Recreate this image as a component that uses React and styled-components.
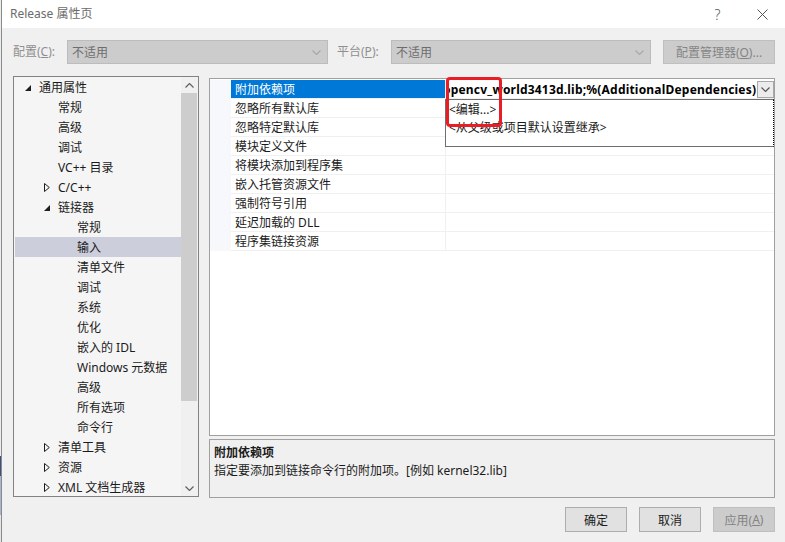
import React from "react";
import styled, { createGlobalStyle } from "styled-components";

const GlobalStyle = createGlobalStyle`
  html, body { margin: 0; padding: 0; background: #f0f0f0; }
  body {
    font-family: "Noto Sans", "Noto Sans CJK SC", sans-serif;
    font-size: 12px;
    color: #1b1b1b;
  }
  * { box-sizing: border-box; }
`;

const Screen = styled.div`
  width: 785px;
  height: 542px;
  display: flex;
  overflow: hidden;
`;

const Backdrop = styled.div`
  width: 1px;
  flex: none;
  background: linear-gradient(
    to bottom,
    #ececec 0 456px,
    #3e5183 456px 476px,
    #a9b6d2 476px 515px,
    #e6e6e6 515px
  );
`;

const Dialog = styled.div`
  flex: 1;
  display: flex;
  flex-direction: column;
  border-left: 1px solid #8a8a8a;
  background: #f0f0f0;
`;

const TitleBar = styled.div`
  height: 28px;
  flex: none;
  background: #fff;
  display: flex;
  align-items: center;
  padding-left: 8px;
  color: #6b6b6b;
`;

const TitleText = styled.span`
  flex: 1;
  line-height: 16px;
`;

const TitleButton = styled.span`
  width: 45px;
  height: 28px;
  display: flex;
  align-items: center;
  justify-content: center;
  color: #555;
  font-size: 14px;
  font-weight: 300;
`;

const Body = styled.div`
  flex: 1;
  display: flex;
  flex-direction: column;
  padding: 12px 10px 0 11px;
`;

const Toolbar = styled.div`
  height: 24px;
  display: flex;
  align-items: center;
`;

const FieldLabel = styled.span`
  width: 54px;
  flex: none;
  margin-left: ${(p) => p.$offset || 0}px;
  color: #8f8f8f;
  line-height: 16px;
`;

const Select = styled.div`
  width: ${(p) => p.$w}px;
  height: 24px;
  flex: none;
  background: #cccccc;
  border: 1px solid #bcbcbc;
  display: flex;
  align-items: center;
  justify-content: space-between;
  padding: 0 6px 0 4px;
  color: #6d6d6d;
`;

const ToolButton = styled.div`
  margin-left: auto;
  width: 112px;
  height: 24px;
  background: #cccccc;
  border: 1px solid #bfbfbf;
  display: flex;
  align-items: center;
  justify-content: center;
  color: #858585;
`;

const Main = styled.div`
  margin-top: 12px;
  height: 422px;
  display: flex;
  gap: 10px;
`;

const TreePanel = styled.div`
  width: 186px;
  height: 421px;
  flex: none;
  border: 1px solid #828282;
  background: #f5f5f5;
  display: flex;
  overflow: hidden;
`;

const TreeList = styled.div`
  flex: 1;
  padding-left: 1px;
  overflow: hidden;
`;

const TreeRow = styled.div`
  height: 20px;
  display: flex;
  align-items: center;
  padding-left: ${(p) => 10 + p.$level * 19}px;
  background: ${(p) => (p.$selected ? "#cccedb" : "transparent")};
  white-space: nowrap;
`;

const ArrowSlot = styled.span`
  width: 14px;
  flex: none;
  display: flex;
  align-items: center;
`;

const Scrollbar = styled.div`
  width: 17px;
  flex: none;
  background: #f0f0f0;
  display: flex;
  flex-direction: column;
`;

const ScrollArrow = styled.div`
  height: 16px;
  flex: none;
  display: flex;
  align-items: center;
  justify-content: center;
`;

const ScrollTrack = styled.div`
  flex: 1;
  display: flex;
  flex-direction: column;
  padding-right: 1px;
`;

const ScrollThumb = styled.div`
  height: 308px;
  background: #cdcdcd;
`;

const RightColumn = styled.div`
  width: 566px;
  flex: none;
  display: flex;
  flex-direction: column;
`;

const Grid = styled.div`
  margin-top: 2px;
  height: 358px;
  border: 1px solid #a0a0a0;
  background: #fff;
  padding-top: 1px;
`;

const GridRow = styled.div`
  height: 19px;
  display: flex;
`;

const Gutter = styled.div`
  width: 21px;
  flex: none;
  background: #f6f8fc;
`;

const NameCell = styled.div`
  width: 215px;
  flex: none;
  padding-left: 4px;
  line-height: 19px;
  border-right: 1px solid #f0f0f0;
  border-bottom: 1px solid #f0f0f0;
  background: ${(p) => (p.$selected ? "#0078d7" : "#fff")};
  color: ${(p) => (p.$selected ? "#fff" : "#1b1b1b")};
  white-space: nowrap;
`;

const ValueCell = styled.div`
  flex: 1;
  position: relative;
  display: flex;
  border-bottom: 1px solid #f0f0f0;
`;

const ValueEdit = styled.div`
  flex: 1;
  overflow: hidden;
  white-space: nowrap;
  padding-left: 1px;
  text-indent: -4px;
  font-weight: 700;
  letter-spacing: 0.2px;
  line-height: 19px;
  color: #000;
`;

const ComboButton = styled.div`
  width: 17px;
  height: 17px;
  flex: none;
  margin-top: 1px;
  border: 1px solid #a8a8a8;
  background: #ececec;
  display: flex;
  align-items: center;
  justify-content: center;
`;

const DropList = styled.div`
  position: absolute;
  top: calc(100% + 1px);
  left: -1px;
  right: 0;
  height: 48px;
  background: #fff;
  border: 1px solid #6e6e6e;
  border-right: 1px dotted #000;
  padding: 1px 0 0 3px;
  z-index: 2;
`;

const DropItem = styled.div`
  line-height: 18px;
  white-space: nowrap;
  color: #1b1b1b;
`;

const Annotation = styled.div`
  position: absolute;
  left: 0;
  top: -3px;
  width: 56px;
  height: 50px;
  border: 3px solid #ea1d25;
  border-radius: 4px;
  z-index: 3;
  pointer-events: none;
`;

const DescPanel = styled.div`
  margin-top: 3px;
  height: 59px;
  border: 1px solid #a0a0a0;
  background: #f0f0f0;
  padding: 4px 4px;
  line-height: 18px;
`;

const DescTitle = styled.div`
  font-weight: 700;
`;

const Footer = styled.div`
  margin-top: 9px;
  display: flex;
  justify-content: flex-end;
  gap: 12px;
`;

const DialogButton = styled.div`
  width: 62px;
  height: 25px;
  display: flex;
  align-items: center;
  justify-content: center;
  background: ${(p) => (p.$disabled ? "#cccccc" : "#e1e1e1")};
  border: 1px solid ${(p) => (p.$disabled ? "#bfbfbf" : "#adadad")};
  color: ${(p) => (p.$disabled ? "#838383" : "#1b1b1b")};
`;

const Chevron = ({ color = "#a8a8a8", up = false, w = 9, h = 5 }) => (
  <svg width={w} height={h} viewBox="0 0 9 5">
    <polyline
      points={up ? "0.5,4.5 4.5,0.5 8.5,4.5" : "0.5,0.5 4.5,4.5 8.5,0.5"}
      fill="none"
      stroke={color}
      strokeWidth="1.2"
    />
  </svg>
);

const ExpandedArrow = () => (
  <svg width="6" height="6" viewBox="0 0 6 6" style={{ marginTop: 2 }}>
    <polygon points="6,0 6,6 0,6" fill="#1e1e1e" />
  </svg>
);

const CollapsedArrow = () => (
  <svg width="6" height="9" viewBox="0 0 6 9" style={{ marginTop: 1 }}>
    <polygon
      points="0.5,0.5 5.3,4.5 0.5,8.5"
      fill="none"
      stroke="#1e1e1e"
      strokeWidth="1"
    />
  </svg>
);

const CloseIcon = () => (
  <svg width="11" height="11" viewBox="0 0 11 11">
    <path d="M0.5 0.5 L10.5 10.5 M10.5 0.5 L0.5 10.5" stroke="#555" strokeWidth="1" />
  </svg>
);

const treeItems = [
  { label: "通用属性", level: 0, arrow: "open" },
  { label: "常规", level: 1 },
  { label: "高级", level: 1 },
  { label: "调试", level: 1 },
  { label: "VC++ 目录", level: 1 },
  { label: "C/C++", level: 1, arrow: "closed" },
  { label: "链接器", level: 1, arrow: "open" },
  { label: "常规", level: 2 },
  { label: "输入", level: 2, selected: true },
  { label: "清单文件", level: 2 },
  { label: "调试", level: 2 },
  { label: "系统", level: 2 },
  { label: "优化", level: 2 },
  { label: "嵌入的 IDL", level: 2 },
  { label: "Windows 元数据", level: 2 },
  { label: "高级", level: 2 },
  { label: "所有选项", level: 2 },
  { label: "命令行", level: 2 },
  { label: "清单工具", level: 1, arrow: "closed" },
  { label: "资源", level: 1, arrow: "closed" },
  { label: "XML 文档生成器", level: 1, arrow: "closed" },
];

const properties = [
  "附加依赖项",
  "忽略所有默认库",
  "忽略特定默认库",
  "模块定义文件",
  "将模块添加到程序集",
  "嵌入托管资源文件",
  "强制符号引用",
  "延迟加载的 DLL",
  "程序集链接资源",
];

export default function App() {
  return (
    <>
      <GlobalStyle />
      <Screen>
        <Backdrop />
        <Dialog>
          <TitleBar>
            <TitleText>Release 属性页</TitleText>
            <TitleButton>?</TitleButton>
            <TitleButton>
              <CloseIcon />
            </TitleButton>
          </TitleBar>
          <Body>
            <Toolbar>
              <FieldLabel>
                配置(<u>C</u>):
              </FieldLabel>
              <Select $w={261}>
                <span>不适用</span>
                <Chevron />
              </Select>
              <FieldLabel $offset={9}>
                平台(<u>P</u>):
              </FieldLabel>
              <Select $w={260}>
                <span>不适用</span>
                <Chevron />
              </Select>
              <ToolButton>
                配置管理器(<u>O</u>)...
              </ToolButton>
            </Toolbar>

            <Main>
              <TreePanel>
                <TreeList>
                  {treeItems.map((item, i) => (
                    <TreeRow key={i} $level={item.level} $selected={item.selected}>
                      <ArrowSlot>
                        {item.arrow === "open" && <ExpandedArrow />}
                        {item.arrow === "closed" && <CollapsedArrow />}
                      </ArrowSlot>
                      <span>{item.label}</span>
                    </TreeRow>
                  ))}
                </TreeList>
                <Scrollbar>
                  <ScrollArrow>
                    <Chevron up color="#606060" />
                  </ScrollArrow>
                  <ScrollTrack>
                    <ScrollThumb />
                  </ScrollTrack>
                  <ScrollArrow>
                    <Chevron color="#606060" />
                  </ScrollArrow>
                </Scrollbar>
              </TreePanel>

              <RightColumn>
                <Grid>
                  {properties.map((name, i) => (
                    <GridRow key={name}>
                      <Gutter />
                      <NameCell $selected={i === 0}>{name}</NameCell>
                      <ValueCell>
                        {i === 0 && (
                          <>
                            <ValueEdit>opencv_world3413d.lib;%(AdditionalDependencies)</ValueEdit>
                            <ComboButton>
                              <Chevron color="#555" />
                            </ComboButton>
                            <DropList>
                              <DropItem>&lt;编辑...&gt;</DropItem>
                              <DropItem>&lt;从父级或项目默认设置继承&gt;</DropItem>
                            </DropList>
                            <Annotation />
                          </>
                        )}
                      </ValueCell>
                    </GridRow>
                  ))}
                </Grid>
                <DescPanel>
                  <DescTitle>附加依赖项</DescTitle>
                  <div>指定要添加到链接命令行的附加项。[例如 kernel32.lib]</div>
                </DescPanel>
              </RightColumn>
            </Main>

            <Footer>
              <DialogButton>确定</DialogButton>
              <DialogButton>取消</DialogButton>
              <DialogButton $disabled>
                应用(<u>A</u>)
              </DialogButton>
            </Footer>
          </Body>
        </Dialog>
      </Screen>
    </>
  );
}
